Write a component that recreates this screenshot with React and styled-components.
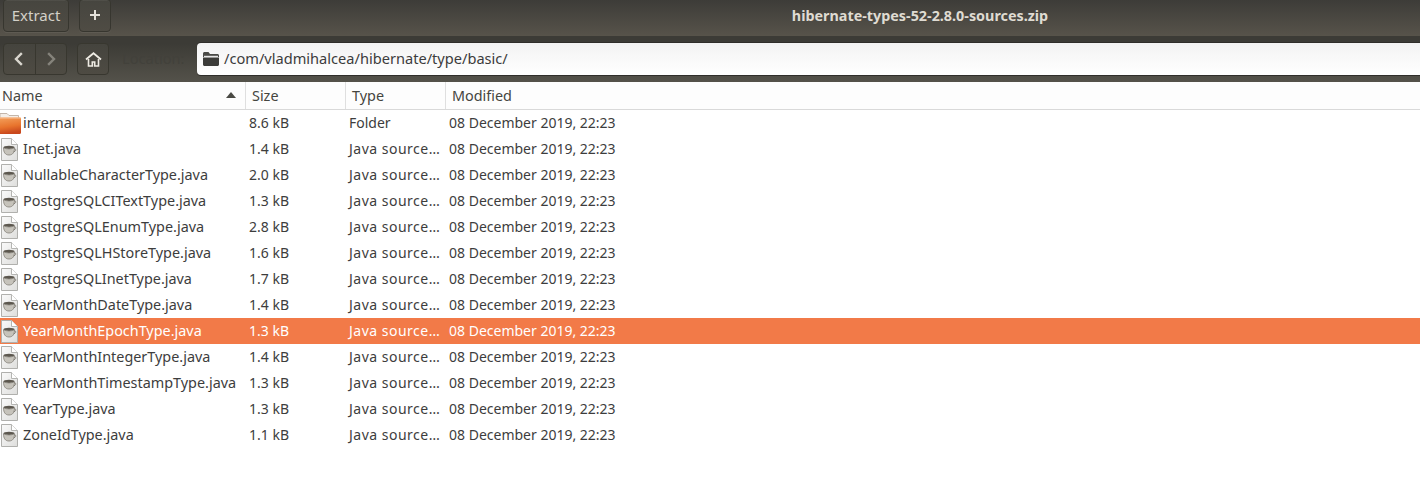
import React from "react";
import styled, { createGlobalStyle } from "styled-components";

const Global = createGlobalStyle`
  html, body { margin: 0; padding: 0; background: #fff; }
  body { font-family: "Noto Sans", "Open Sans", sans-serif; font-size: 14px; overflow: hidden; }
`;

const Page = styled.div`
  width: 1420px;
  height: 503px;
  display: flex;
  flex-direction: column;
  overflow: hidden;
  background: #fff;
`;

const TitleBar = styled.header`
  height: 36px;
  flex: none;
  display: flex;
  align-items: flex-start;
  gap: 10px;
  padding-left: 3px;
  background: linear-gradient(#3d3c38, #57534a);
  overflow: hidden;
`;

const ToolButton = styled.button`
  width: ${(p) => p.$w}px;
  height: 33px;
  margin-top: -1px;
  padding: 0 0 1px;
  flex: none;
  display: flex;
  align-items: center;
  justify-content: center;
  border: 1px solid #37362f;
  border-radius: 4px;
  background: linear-gradient(#46453f, #4f4c44);
  box-shadow: inset 0 1px 0 rgba(255, 255, 255, 0.05), 0 1px 0 rgba(255, 255, 255, 0.06);
  color: #d3d0c8;
  font: inherit;
  font-size: 15px;
`;

const Title = styled.h1`
  flex: 1;
  margin: 0;
  padding: 6px 0 0 299px;
  text-align: center;
  color: #dfdbd2;
  font-size: 14.35px;
  line-height: 19px;
  font-weight: 700;
`;

const LocationBar = styled.div`
  height: 46px;
  flex: none;
  display: flex;
  align-items: center;
  padding-left: 3px;
  background: linear-gradient(#3c3b36 0, #3c3b36 16%, #54524a 100%);
`;

const NavGroup = styled.div`
  width: 64px;
  height: 32px;
  flex: none;
  display: flex;
  border: 1px solid #38372f;
  border-radius: 4px;
  box-sizing: border-box;
  overflow: hidden;
  background: linear-gradient(#45443e, #4e4b43);
`;

const NavButton = styled.span`
  flex: 1;
  display: flex;
  align-items: center;
  justify-content: center;
  & + & { border-left: 1px solid #38372f; }
`;

const HomeButton = styled.span`
  width: 32px;
  height: 32px;
  margin-left: 10px;
  flex: none;
  box-sizing: border-box;
  display: flex;
  align-items: center;
  justify-content: center;
  border: 1px solid #38372f;
  border-radius: 4px;
  background: linear-gradient(#45443e, #4e4b43);
`;

const LocationLabel = styled.span`
  width: 75px;
  margin-left: 13px;
  margin-bottom: 2px;
  flex: none;
  color: #42413b;
  font-size: 14.6px;
  white-space: nowrap;
`;

const AddressField = styled.div`
  flex: 1;
  height: 32px;
  margin-right: -6px;
  display: flex;
  align-items: center;
  gap: 5px;
  padding-left: 6px;
  border-radius: 4px;
  background: linear-gradient(#f3f3f3, #ffffff);
  box-shadow: 0 -1px 0 #2f2e2a, 0 1px 0 #2f2e2a;
  color: #3c3c3c;
  font-size: 14.6px;
`;

const AddressText = styled.span`
  margin-bottom: 2px;
`;

const HeaderRow = styled.div`
  height: 28px;
  flex: none;
  box-sizing: border-box;
  display: grid;
  grid-template-columns: 246px 100px 100px 1fr;
  border-bottom: 1px solid #d9d9d9;
  background: #fdfdfd;
`;

const HeaderCell = styled.div`
  display: flex;
  align-items: center;
  justify-content: space-between;
  padding: 0 ${(p) => (p.$first ? "9px 1px 2px" : "0 1px 6px")};
  border-right: ${(p) => (p.$last ? "none" : "1px solid #dfdfdf")};
  color: #45453f;
  font-size: 14.4px;
`;

const FileList = styled.ul`
  list-style: none;
  margin: 0;
  padding: 0;
`;

const FileRow = styled.li`
  height: 26px;
  display: grid;
  grid-template-columns: 246px 100px 100px 1fr;
  align-items: center;
  background: ${(p) => (p.$selected ? "#f27a48" : "#fff")};
  color: ${(p) => (p.$selected ? "#fff" : "#3d3d3d")};
  font-size: 14px;
`;

const NameCell = styled.div`
  display: flex;
  align-items: center;
  white-space: nowrap;
`;

const IconSlot = styled.span`
  width: 23px;
  height: 26px;
  flex: none;
  display: flex;
  align-items: center;
`;

const NameLabel = styled.span`
  margin-bottom: 2px;
  font-size: 14.4px;
`;

const Cell = styled.div`
  padding: 0 0 2px 3px;
  white-space: nowrap;
  letter-spacing: ${(p) => (p.$spaced ? "0.5px" : "0")};
`;

const ArrowIcon = styled.svg`
  width: 16px;
  height: 16px;
  fill: none;
  stroke: ${(p) => p.$color};
  stroke-width: 2.4;
  stroke-linecap: square;
`;

const Back = () => (
  <ArrowIcon viewBox="0 0 16 16" $color="#d9d6ce"><path d="M10 3 L5 8 L10 13" /></ArrowIcon>
);
const Forward = () => (
  <ArrowIcon viewBox="0 0 16 16" $color="#85837b"><path d="M6 3 L11 8 L6 13" /></ArrowIcon>
);
const Plus = () => (
  <svg width="12" height="12" viewBox="0 0 12 12"><path d="M6 1v10M1 6h10" stroke="#e4e1d9" strokeWidth="2" /></svg>
);
const Home = () => (
  <svg width="17" height="15" viewBox="0 0 17 15">
    <path d="M1 7.5 8.5 1.2 16 7.5" fill="none" stroke="#eeebe3" strokeWidth="1.8" />
    <path d="M3.5 7v7h3.800v-4h2.400v4h3.800V7" fill="none" stroke="#eeebe3" strokeWidth="1.6" />
  </svg>
);
const AddressFolder = () => (
  <svg width="16" height="14" viewBox="0 0 16 14">
    <path d="M0 1.500C0 .7.700 0 1.500 0h4L7 2h7.500c.8 0 1.500.7 1.500 1.500V5H0Z" fill="#4a4a46" />
    <path d="M0 5.500h16v7c0 .8-.7 1.500-1.500 1.500h-13C.7 14 0 13.300 0 12.500Z" fill="#3c3c39" />
    <rect x="1" y="3.800" width="14" height="1.200" fill="#e6e6e6" />
  </svg>
);
const SortArrow = () => (
  <svg width="10" height="6" viewBox="0 0 10 6"><path d="M0 6 5 0l5 6Z" fill="#4a4a44" /></svg>
);
const FolderIcon = () => (
  <svg width="21" height="22" viewBox="0 0 21 22">
    <defs>
      <linearGradient id="fg" x1="0" y1="0" x2="0.2" y2="1">
        <stop offset="0" stopColor="#f3a05c" />
        <stop offset="0.6" stopColor="#e8742d" />
        <stop offset="1" stopColor="#c9481d" />
      </linearGradient>
    </defs>
    <path d="M0 1.500h7l2 2h9.500V7H0Z" fill="#f4eee8" stroke="#c4b6aa" strokeWidth="1" />
    <path d="M0 5.500h19.800c.7 0 1.200.5 1.200 1.200v14.100c0 .7-.5 1.200-1.200 1.200H0Z" fill="url(#fg)" />
    <path d="M0 6h20.500" stroke="#f8c096" strokeWidth="1" />
  </svg>
);
const JavaIcon = () => (
  <svg width="18" height="23" viewBox="0 0 18 23">
    <defs>
      <linearGradient id="pg" x1="0" y1="0" x2="1" y2="1">
        <stop offset="0" stopColor="#fafafa" />
        <stop offset="1" stopColor="#dededc" />
      </linearGradient>
    </defs>
    <path d="M1.500 .5H11.500L17.500 6.500V22.500H1.500Z" fill="url(#pg)" stroke="#b0b0ad" />
    <path d="M11.500 .5V6.500h6" fill="#ffffff" stroke="#b5b5b2" />
    <ellipse cx="9" cy="9.300" rx="5.500" ry="1.600" fill="#5c574e" />
    <path d="M3.500 9.800c0 4.700 1.800 7.200 5.500 7.200s5.500-2.500 5.500-7.200c-2.800 1.500-8.200 1.500-11 0Z" fill="#c6c3bb" stroke="#77736a" strokeWidth=".7" />
    <path d="M14.400 11c1.800-.5 2.100 2.100-.6 2.800" fill="none" stroke="#807c73" strokeWidth="1" />
  </svg>
);

const files = [
  ["internal", "8.6 kB", "Folder"],
  ["Inet.java", "1.4 kB"],
  ["NullableCharacterType.java", "2.0 kB"],
  ["PostgreSQLCITextType.java", "1.3 kB"],
  ["PostgreSQLEnumType.java", "2.8 kB"],
  ["PostgreSQLHStoreType.java", "1.6 kB"],
  ["PostgreSQLInetType.java", "1.7 kB"],
  ["YearMonthDateType.java", "1.4 kB"],
  ["YearMonthEpochType.java", "1.3 kB"],
  ["YearMonthIntegerType.java", "1.4 kB"],
  ["YearMonthTimestampType.java", "1.3 kB"],
  ["YearType.java", "1.3 kB"],
  ["ZoneIdType.java", "1.1 kB"],
];

export default function App() {
  return (
    <Page>
      <Global />
      <TitleBar>
        <ToolButton $w={66}>Extract</ToolButton>
        <ToolButton $w={32}><Plus /></ToolButton>
        <Title>hibernate-types-52-2.8.0-sources.zip</Title>
      </TitleBar>
      <LocationBar>
        <NavGroup>
          <NavButton><Back /></NavButton>
          <NavButton><Forward /></NavButton>
        </NavGroup>
        <HomeButton><Home /></HomeButton>
        <LocationLabel>Location:</LocationLabel>
        <AddressField>
          <AddressFolder />
          <AddressText>/com/vladmihalcea/hibernate/type/basic/</AddressText>
        </AddressField>
      </LocationBar>
      <HeaderRow>
        <HeaderCell $first>Name<SortArrow /></HeaderCell>
        <HeaderCell>Size</HeaderCell>
        <HeaderCell>Type</HeaderCell>
        <HeaderCell $last>Modified</HeaderCell>
      </HeaderRow>
      <FileList>
        {files.map(([name, size, type], i) => (
          <FileRow key={name} $selected={i === 8}>
            <NameCell>
              <IconSlot>{type ? <FolderIcon /> : <JavaIcon />}</IconSlot>
              <NameLabel>{name}</NameLabel>
            </NameCell>
            <Cell>{size}</Cell>
            <Cell $spaced={!type}>{type || "Java source…"}</Cell>
            <Cell>08 December 2019, 22:23</Cell>
          </FileRow>
        ))}
      </FileList>
    </Page>
  );
}
